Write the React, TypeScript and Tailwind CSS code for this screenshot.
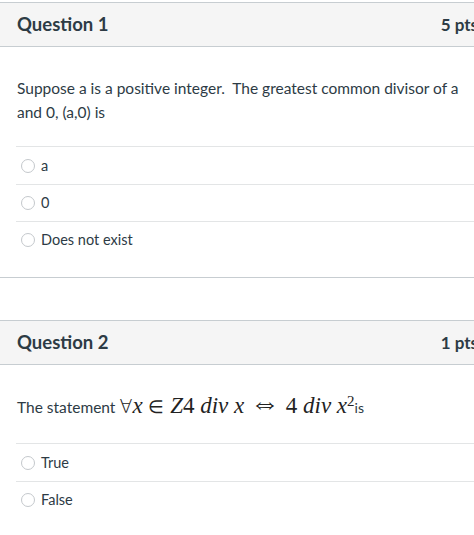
import React from "react";

const TEXT = "text-[#2d3b45]";

function Radio() {
    return <span className="w-[14px] h-[14px] rounded-full border border-[#c4c8cc] bg-white flex-shrink-0" />;
}

function Option({ label, first }: { label: string; first?: boolean }) {
    return (
        <div className={`flex items-center gap-[6px] h-[37px] pl-[5px] ${first ? "" : "border-t border-[#e3e5e6]"}`}>
            <Radio />
            <span className={`text-[14.5px] ${TEXT}`}>{label}</span>
        </div>
    );
}

function Header({ title, pts }: { title: string; pts: string }) {
    return (
        <div className="flex items-center justify-between h-[45px] px-[17px] bg-[#f5f5f5] border-y border-[#c7cdd1]">
            <h2 className={`text-[18.5px] font-bold ${TEXT}`}>{title}</h2>
            <span className={`text-[17px] font-bold ${TEXT}`}>{pts}</span>
        </div>
    );
}

function Options({ items }: { items: string[] }) {
    return (
        <div className="ml-4 border-t border-[#e3e5e6]">
            {items.map((o, i) => (
                <Option key={o} label={o} first={i === 0} />
            ))}
        </div>
    );
}

const SYM = "font-['DejaVu_Sans',serif] not-italic font-extralight";

export default function App() {
    return (
        <div className="w-[474px] h-[535px] overflow-hidden bg-white font-['Lato',sans-serif] pt-[2px]">
            <div className="w-[495px]">
                <div className="border-b border-[#c7cdd1]">
                    <Header title="Question 1" pts="5 pts" />
                    <p className={`px-[17px] pt-[29px] pb-[22px] text-[15.5px] leading-6 ${TEXT}`}>
                        Suppose a is a positive integer.&nbsp; The greatest common divisor of a and 0, (a,0) is
                    </p>
                    <Options items={["a", "0", "Does not exist"]} />
                    <div className="h-[19px]" />
                </div>
                <div className="h-[42px]" />
                <div>
                    <Header title="Question 2" pts="1 pts" />
                    <p className={`px-[17px] pt-[23px] pb-[18px] text-[15.5px] leading-[34px] ${TEXT}`}>
                        The statement{" "}
                        <span className="font-['Liberation_Serif',serif] text-[23px] text-[#222]">
                            <span className={`${SYM} text-[19px]`}>∀</span>
                            <i>x</i> <span className={`${SYM} text-[18px]`}>∈</span> <i>Z</i>4 <i>div</i> <i>x</i>{" "}
                            <span className={`${SYM} text-[30px] leading-none`}>⇔</span> 4 <i>div</i> <i>x</i>
                            <sup className="text-[15px]">2</sup>
                        </span>
                        <span className="text-[14px]">is</span>
                    </p>
                    <Options items={["True", "False"]} />
                </div>
            </div>
        </div>
    );
}
